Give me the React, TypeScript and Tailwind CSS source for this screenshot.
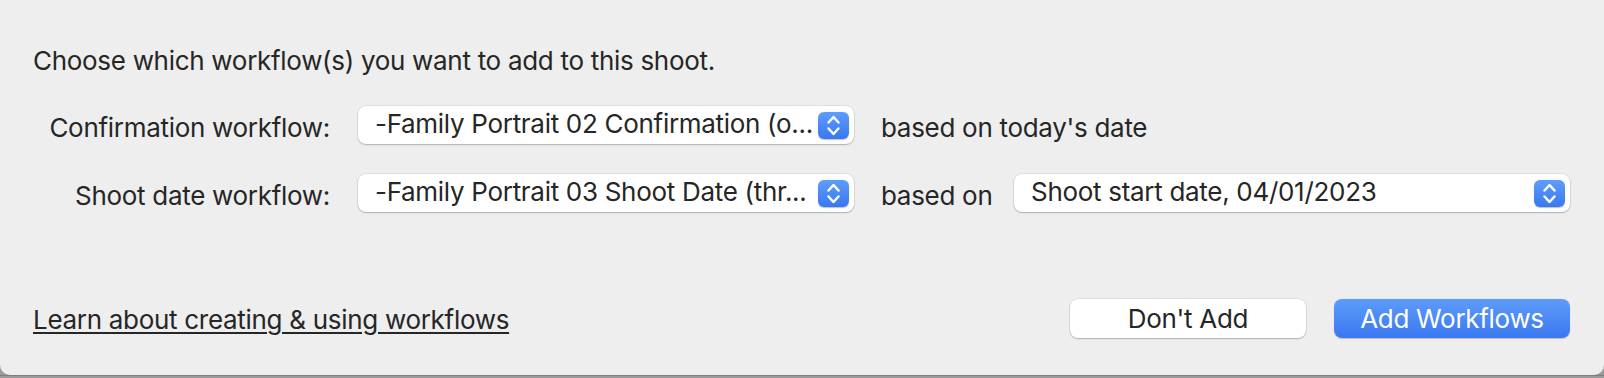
import React from "react";

const font = { fontFamily: "Inter, 'Liberation Sans', sans-serif" };

function Stepper() {
  return (
    <div className="flex h-[27px] w-[31px] shrink-0 items-center justify-center rounded-[6px] bg-gradient-to-b from-[#5f9dfb] to-[#3877f1] shadow-[0_0.5px_1px_rgba(0,0,0,0.25)]">
      <svg width="31" height="27" viewBox="0 0 31 27" fill="none">
        <path d="M10.5 10.5 L15.5 5 L20.5 10.5" stroke="white" strokeWidth="2.5" strokeLinecap="round" strokeLinejoin="round" />
        <path d="M10.5 16.5 L15.5 22 L20.5 16.5" stroke="white" strokeWidth="2.5" strokeLinecap="round" strokeLinejoin="round" />
      </svg>
    </div>
  );
}

function Select({ value, className }: { value: string; className: string }) {
  return (
    <div
      className={`flex h-[38px] items-center rounded-[8px] bg-white pl-[17px] pr-[5px] shadow-[0_0_0_0.5px_rgba(0,0,0,0.12),0_1px_1.5px_rgba(0,0,0,0.22)] ${className}`}
    >
      <span className="min-w-0 flex-1 overflow-hidden whitespace-nowrap pb-[2px] text-[26px] leading-[32px] tracking-[-0.3px] text-[#262626]">
        {value}
      </span>
      <Stepper />
    </div>
  );
}

export default function App() {
  return (
    <div className="h-[378px] w-full bg-[#9a9a9a] tracking-[-0.3px]" style={font}>
      <div className="flex h-[375px] flex-col rounded-b-[10px] bg-[#eeeeee] pl-[33px] pr-[34px] text-[#262626]">
        <p className="pt-[45px] text-[26px] leading-[32px]">
          Choose which workflow(s) you want to add to this shoot.
        </p>

        <div className="mt-[29px] flex flex-col gap-[30px]">
          <div className="flex h-[38px] items-center">
            <span className="w-[297px] shrink-0 pt-[6px] text-right text-[26px] leading-[32px]">
              Confirmation workflow:
            </span>
            <Select value="-Family Portrait 02 Confirmation (o..." className="ml-[28px] w-[496px]" />
            <span className="ml-[27px] pt-[6px] text-[26px] leading-[32px]">based on today's date</span>
          </div>

          <div className="flex h-[38px] items-center">
            <span className="w-[297px] shrink-0 pt-[6px] text-right text-[26px] leading-[32px]">
              Shoot date workflow:
            </span>
            <Select value="-Family Portrait 03 Shoot Date (thr..." className="ml-[28px] w-[496px]" />
            <span className="ml-[27px] pt-[6px] text-[26px] leading-[32px]">based on</span>
            <Select value="Shoot start date, 04/01/2023" className="ml-auto w-[556px]" />
          </div>
        </div>

        <div className="mt-[87px] flex h-[39px] items-center justify-between">
          <a className="pt-[2px] text-[26px] leading-[32px] underline decoration-[2px] underline-offset-[3px]">
            Learn about creating &amp; using workflows
          </a>
          <div className="flex gap-[28px]">
            <button className="h-[39px] w-[236px] rounded-[8px] bg-white text-[26px] leading-[32px] text-[#262626] shadow-[0_0_0_0.5px_rgba(0,0,0,0.12),0_1px_1.5px_rgba(0,0,0,0.22)]">
              Don't Add
            </button>
            <button className="h-[39px] w-[236px] rounded-[8px] bg-gradient-to-b from-[#5e9bf9] to-[#3a78f1] text-[26px] leading-[32px] text-white shadow-[0_0.5px_1px_rgba(0,0,0,0.2)]">
              Add Workflows
            </button>
          </div>
        </div>
      </div>
      <div className="h-[3px] overflow-hidden border-t border-[#7e7e7e] pl-[498px]">
        <div className="-mt-[1px] text-[22px] leading-[24px] text-[#4a4a4a]">
          — The Family Portrait Workflow
        </div>
      </div>
    </div>
  );
}
